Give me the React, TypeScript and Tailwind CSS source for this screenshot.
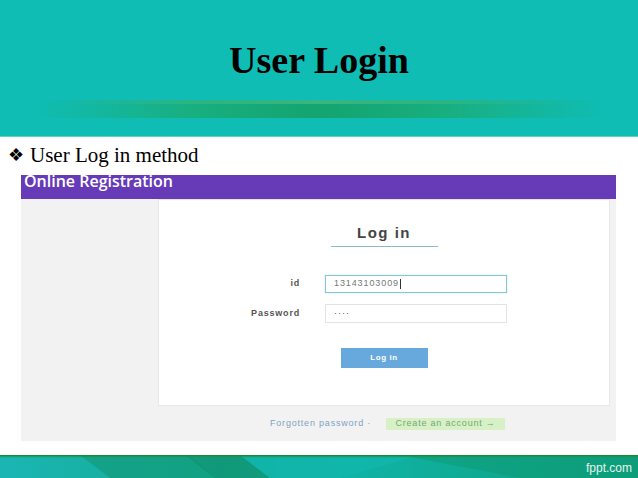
import React from "react";

function BottomBand() {
  return (
    <div className="relative h-[23px] w-full overflow-hidden bg-[#14b3ae]">
      <svg className="absolute inset-0" width="638" height="23" viewBox="0 0 638 23" preserveAspectRatio="none">
        <defs>
          <linearGradient id="bb" x1="0" y1="0" x2="1" y2="0">
            <stop offset="0" stopColor="#1bb6b4" />
            <stop offset="0.35" stopColor="#13a98f" />
            <stop offset="0.55" stopColor="#10b3a6" />
            <stop offset="1" stopColor="#0e9f7c" />
          </linearGradient>
        </defs>
        <rect width="638" height="23" fill="url(#bb)" />
        <polygon points="80,0 190,0 215,23 110,23" fill="#129c7e" opacity="0.7" />
        <polygon points="185,0 240,0 270,23 215,23" fill="#0f8f6a" opacity="0.6" />
        <polygon points="240,0 420,0 340,23 270,23" fill="#12b6ad" opacity="0.8" />
        <polygon points="400,0 638,0 638,23 520,23" fill="#0e9c78" opacity="0.6" />
        <rect width="638" height="1.5" fill="#178b3e" />
        <rect y="1.5" width="638" height="1" fill="#1c9a5a" opacity="0.5" />
      </svg>
      <span className="absolute right-[6px] top-[6px] text-[12px] leading-[14px] text-[#e6f4ef] font-['Liberation_Sans',sans-serif]">
        fppt.com
      </span>
    </div>
  );
}

function LoginCard() {
  return (
    <div className="flex h-[207px] w-[452px] flex-col items-center bg-white border border-[#e6e6e6] font-['Liberation_Sans',Arial,sans-serif]">
      <div className="mt-[23px] h-[20px] text-[15px] font-bold leading-[20px] tracking-[1.5px] text-[#444]">
        Log in
      </div>
      <div className="mt-[3px] h-px w-[107px] bg-[#8cbccb]" />
      <div className="mt-[28px] flex w-full items-center">
        <div className="w-[142px] pr-px text-right text-[9px] font-bold tracking-[0.8px] text-[#555]">id</div>
        <div className="ml-[24px] flex h-[18px] w-[182px] items-center border border-[#86c7d3] pl-[8px] text-[9px] tracking-[0.9px] text-[#777] shadow-[0_0_2px_#bfe3ea]">
          13143103009<span className="ml-px h-[10px] w-px bg-[#333]" />
        </div>
      </div>
      <div className="mt-[11px] flex w-full items-center">
        <div className="w-[142px] pr-px text-right text-[9px] font-bold tracking-[0.8px] text-[#555]">Password</div>
        <div className="ml-[24px] flex h-[19px] w-[182px] items-center border border-[#e3e3e3] pl-[8px] text-[9px] leading-none tracking-[1px] text-[#555]">
          ····
        </div>
      </div>
      <div className="mt-[25px] flex h-[20px] w-[87px] items-center justify-center bg-[#67a9dd] text-[8px] font-bold tracking-[0.6px] text-white">
        Log in
      </div>
    </div>
  );
}

export default function App() {
  return (
    <div className="flex h-[478px] w-[638px] flex-col overflow-hidden bg-white">
      <div className="flex h-[137px] flex-col bg-[#0fbdb4]">
        <div className="flex h-[100px] items-start justify-center pt-[39px]">
          <h1 className="text-[38px] font-bold leading-[42px] text-black font-['Liberation_Serif','Times_New_Roman',serif]">
            User Login
          </h1>
        </div>
        <div className="h-[18px] bg-[linear-gradient(to_right,rgba(16,175,120,0)_5%,rgba(28,170,110,0.75)_30%,rgba(20,160,100,0.85)_50%,rgba(28,170,110,0.75)_70%,rgba(16,175,120,0)_95%)]">
          <div className="h-[4px] bg-[linear-gradient(to_right,rgba(120,220,200,0)_10%,rgba(90,200,150,0.5)_50%,rgba(120,220,200,0)_90%)]" />
        </div>
        <div className="flex-1" />
        <div className="h-px bg-[#5fd3c8]" />
      </div>

      <div className="flex h-[38px] items-start pl-[8px] pt-[5px] text-[21px] leading-[26px] text-black font-['Liberation_Serif','Times_New_Roman',serif]">
        <span className="mr-[6px] text-[18px] leading-[26px]">❖</span>
        <span>User Log in method</span>
      </div>

      <div className="ml-[21px] flex h-[266px] w-[595px] flex-col">
        <div className="h-[24px] bg-[#673ab7] pl-[3px]">
          <div className="-mt-[2px] text-[16px] font-semibold leading-[16px] text-white font-['Open_Sans',sans-serif]">
            Online Registration
          </div>
        </div>
        <div className="flex flex-1 flex-col bg-[#f2f2f2]">
          <div className="flex">
            <div className="w-[137px]" />
            <LoginCard />
          </div>
          <div className="flex flex-1 items-center font-['Liberation_Sans',Arial,sans-serif] text-[9px] tracking-[0.8px]">
            <div className="w-[249px]" />
            <span className="text-[#7fa3c4]">Forgotten password ·</span>
            <span className="ml-[15px] flex h-[12px] w-[119px] items-center justify-center bg-[#d8f0c6] text-[#74a872]">
              Create an account →
            </span>
          </div>
        </div>
      </div>

      <div className="h-[14px]" />
      <BottomBand />
    </div>
  );
}
